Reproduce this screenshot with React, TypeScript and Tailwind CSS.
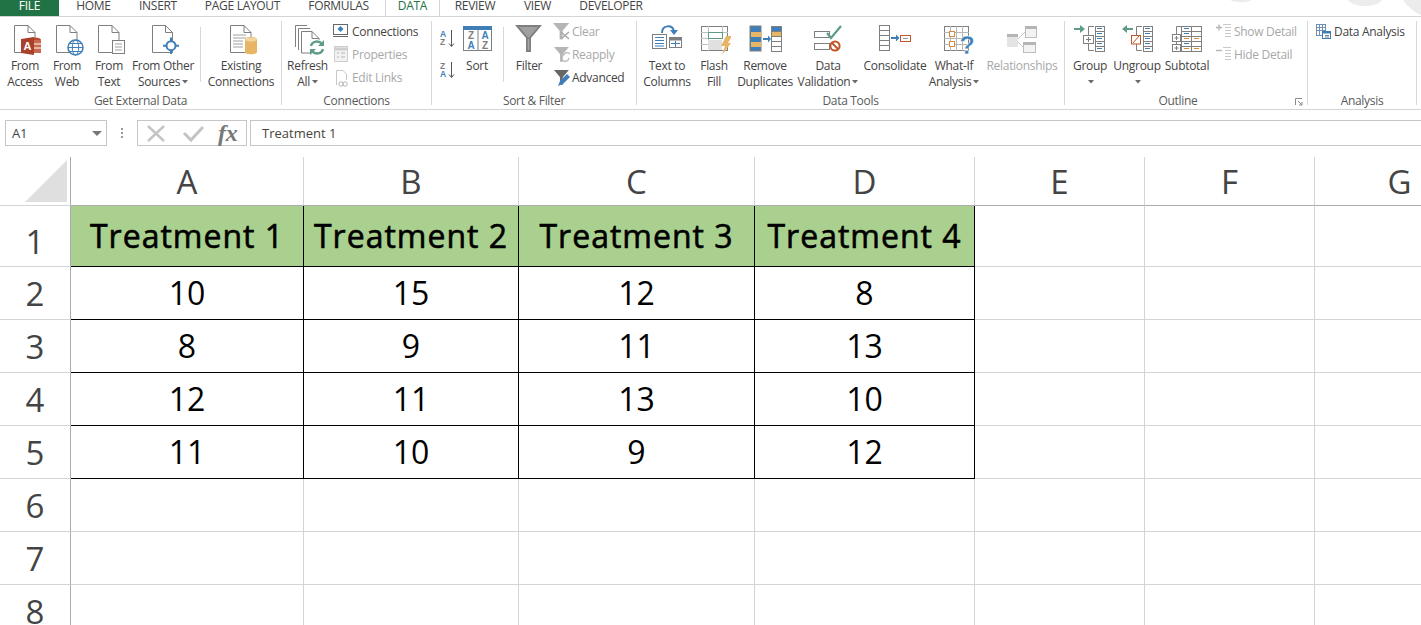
import type { ReactNode } from 'react';

const G = '#7f7f7f';
const BLUE = '#3f7fb8';
const ORANGE = '#e8b564';
const RUST = '#c0562a';
const TEAL = '#5f9c84';

// Icons are drawn in page coordinates, the viewBox picks the part they sit in
function Icon({ x, y, w, h, children }: { x: number; y: number; w: number; h: number; children: ReactNode }) {
  return (
    <svg width={w} height={h} viewBox={`${x} ${y} ${w} ${h}`} className="block shrink-0" fill="none">
      {children}
    </svg>
  );
}

function Doc({ x, r, t = 25.5, b = 52.5, color = G }: { x: number; r: number; t?: number; b?: number; color?: string }) {
  return (
    <path
      d={`M${x + 0.5} ${b}V${t}H${r - 7}L${r} ${t + 7}V${b}H${x + 0.5}M${r - 7} ${t}V${t + 7}H${r}`}
      stroke={color}
      fill="#fff"
    />
  );
}

function Caret() {
  return (
    <svg width="6" height="4" viewBox="0 0 6 4" className="inline-block ml-[2px] mb-[2px]">
      <path d="M0 0H6L3 3.5Z" fill="#6a6a6a" />
    </svg>
  );
}

function Big({ w, lines, caret, muted, icon, className = '' }: { w: string; lines: string[]; caret?: boolean; muted?: boolean; icon: ReactNode; className?: string }) {
  return (
    <div className={`${w} ${className} shrink-0 flex flex-col items-center ${muted ? 'text-[#a8a8a8]' : ''}`}>
      <div className="h-[35px] mt-[2px] flex justify-center">{icon}</div>
      {lines.map((l, i) => (
        <div key={i} className="h-[16px] leading-[16px] whitespace-nowrap">
          {l}
          {caret && lines.length > 1 && i === lines.length - 1 && <Caret />}
        </div>
      ))}
      {caret && lines.length === 1 && (
        <div className="h-[16px] leading-[16px]">
          <Caret />
        </div>
      )}
    </div>
  );
}

function Small({ label, icon, muted }: { label: string; icon: ReactNode; muted?: boolean }) {
  return (
    <div className={`h-[23px] flex items-center gap-[2px] whitespace-nowrap ${muted ? 'text-[#a8a8a8]' : ''}`}>
      {icon}
      <span>{label}</span>
    </div>
  );
}

function Group({ w, label, children, last, labelClass = '', launcher }: { w: string; label: string; children: ReactNode; last?: boolean; labelClass?: string; launcher?: boolean }) {
  return (
    <div className={`${w} h-[84px] mt-[4px] shrink-0 relative ${last ? '' : 'border-r border-[#d8d8d8]'}`}>
      <div className="h-[72px] flex">{children}</div>
      <div className={`h-[16px] leading-[16px] text-center text-[#5a5a5a] ${labelClass}`}>{label}</div>
      {launcher && (
        <svg width="8" height="8" viewBox="0 0 8 8" className="absolute right-[4px] top-[77px]">
          <path d="M0.5 7V0.5H7M3 3L7 7M7 4V7H4" stroke="#8a8a8a" fill="none" />
        </svg>
      )}
    </div>
  );
}

function Funnel({ x, y, s = 1, color = G }: { x: number; y: number; s?: number; color?: string }) {
  return <path transform={`translate(${x} ${y}) scale(${s})`} d="M0 0H27L16 13V27H11V13Z" fill={color} />;
}

function Sep({ className }: { className: string }) {
  return <div className={`w-px h-[55px] mt-[6px] bg-[#d8d8d8] shrink-0 ${className}`} />;
}

function Rows({ x, y, w, n, h, color = G, fill = 'none' }: { x: number; y: number; w: number; n: number; h: number; color?: string; fill?: string }) {
  return (
    <>
      <rect x={x + 0.5} y={y + 0.5} width={w} height={n * h} stroke={color} fill={fill} />
      {Array.from({ length: n - 1 }).map((_, i) => (
        <path key={i} d={`M${x} ${y + 0.5 + (i + 1) * h}H${x + w}`} stroke={color} />
      ))}
    </>
  );
}

const fromAccess = (
  <Icon x={4} y={23} w={42} h={34}>
    <Doc x={14} r={35} />
    <rect x={25} y={38} width={16} height={16} fill="#fff" />
    <ellipse cx={35} cy={40} rx={6} ry={2.5} fill="#b8482f" />
    <rect x={29} y={40} width={12} height={13} fill="#c9694f" />
    <path d="M30 44H41M30 48H41" stroke="#fff" />
    <path d="M21 39L34 37V55L21 53Z" fill="#a8402a" />
    <text x={23.5} y={50} fontSize={11} fontWeight={700} fill="#fff" fontFamily="Liberation Sans, sans-serif">A</text>
  </Icon>
);

const fromWeb = (
  <Icon x={46} y={23} w={42} h={34}>
    <Doc x={56} r={77} />
    <circle cx={75.5} cy={47.5} r={7.5} fill="#fff" stroke={BLUE} strokeWidth={1.5} />
    <ellipse cx={75.5} cy={47.5} rx={3.2} ry={7.5} stroke={BLUE} />
    <path d="M68 47.5H83M69.5 43.5H81.5M69.5 51.5H81.5" stroke={BLUE} />
  </Icon>
);

const fromText = (
  <Icon x={88} y={23} w={42} h={34}>
    <Doc x={98} r={119} />
    <rect x={112.5} y={40.5} width={12} height={13} fill="#fff" stroke={G} />
    <path d="M115 44H122M115 47H122M115 50H122" stroke="#a0a0a0" />
  </Icon>
);

const fromOther = (
  <Icon x={130} y={23} w={66} h={34}>
    <Doc x={152} r={172.5} />
    <path d="M171 37.5V54M163 45.7H179" stroke={BLUE} strokeWidth={2} />
    <circle cx={171} cy={45.7} r={4.5} fill="#fff" stroke={BLUE} strokeWidth={2} />
  </Icon>
);

const existing = (
  <Icon x={205} y={23} w={72} h={34}>
    <Doc x={230} r={251} />
    <path d="M233 35H246M233 38H246M233 41H243M233 44H243M233 47H243" stroke="#a0a0a0" />
    <path d="M245 39.5C245 36 257 36 257 39.5V52C257 55 245 55 245 52Z" fill={ORANGE} />
    <ellipse cx={251} cy={39.5} rx={6} ry={2} fill="#f3d6a0" />
  </Icon>
);

const refresh = (
  <Icon x={285} y={23} w={45} h={34}>
    <path d="M295.5 47V25.5H307M298.5 50V28.5H310" stroke={G} />
    <Doc x={301} r={319} t={31.5} b={53} />
    <circle cx={317} cy={47.5} r={8} fill="#fff" />
    <path d="M311 46C312 41 319 40 322 44M323 49C322 54 315 55 312 51" stroke={TEAL} strokeWidth={2.4} />
    <path d="M324 40V46H318ZM310 55V49H316Z" fill={TEAL} />
  </Icon>
);

const sortBig = (
  <Icon x={457} y={23} w={40} h={34}>
    <rect x={463.5} y={27.5} width={28} height={23} fill="#fff" stroke={G} />
    <rect x={463} y={26} width={29} height={4} fill={BLUE} />
    <path d="M478 30V50" stroke={G} />
    <g fontSize={10} fontFamily="Liberation Sans, sans-serif" fontWeight={700} textAnchor="middle">
      <text x={471} y={39} fill={G}>Z</text>
      <text x={471} y={49} fill={BLUE}>A</text>
      <text x={485} y={39} fill={BLUE}>A</text>
      <text x={485} y={49} fill={G}>Z</text>
    </g>
  </Icon>
);

const sortSmall = (
  <Icon x={440} y={23} w={17} h={56}>
    <g fontSize={8.5} fontFamily="Liberation Sans, sans-serif" fontWeight={700}>
      <text x={440} y={37} fill={BLUE}>A</text>
      <text x={440} y={45} fill={G}>Z</text>
      <text x={440} y={69} fill={G}>Z</text>
      <text x={440} y={77} fill={BLUE}>A</text>
    </g>
    <path d="M451.5 30V46M449 43.5L451.5 46.5L454 43.5M451.5 62V77M449 74.5L451.5 77.5L454 74.5" stroke="#555" />
  </Icon>
);

const filter = (
  <Icon x={507} y={23} w={44} h={34}>
    <Funnel x={515} y={25} />
    <path d="M519 27H538L528.5 38Z" fill="#a0a0a0" />
    <path d="M528.5 39V50" stroke="#a8a8a8" strokeWidth={1.5} />
  </Icon>
);

const clear = (
  <Icon x={553} y={20} w={17} h={23}>
    <Funnel x={553} y={23} s={0.6} color="#b5b5b5" />
    <path d="M561 32L569 39M569 32L561 39" stroke="#a8a8a8" strokeWidth={1.5} />
  </Icon>
);

const reapply = (
  <Icon x={553} y={43} w={17} h={23}>
    <Funnel x={554} y={47} s={0.55} color="#b5b5b5" />
    <path d="M563 56C564 52 568 52 570 54M569 58C568 62 564 62 562 60" stroke="#bbb" strokeWidth={1.3} />
  </Icon>
);

const advanced = (
  <Icon x={553} y={66} w={17} h={23}>
    <Funnel x={554} y={70} s={0.55} color="#666" />
    <path d="M558 86L560 81L567 74L570 77L563 84Z" fill={BLUE} />
  </Icon>
);

const textToColumns = (
  <Icon x={637} y={23} w={60} h={34}>
    <rect x={652.5} y={34.5} width={14} height={14} fill="#fff" stroke={G} />
    <path d="M655 37.5H664M655 40.5H664M655 43.5H664M655 46H664" stroke={BLUE} />
    <rect x={669.5} y={37.5} width={12} height={10} fill="#fff" stroke={G} />
    <path d="M669 39H682" stroke={G} strokeWidth={3} />
    <path d="M675.5 41V47M671 43.5H680" stroke={BLUE} />
    <path d="M662 33C662 25 672 24 674 31" stroke={BLUE} strokeWidth={2} />
    <path d="M670 30H678L674 35Z" fill={BLUE} />
  </Icon>
);

const flashFill = (
  <Icon x={697} y={23} w={34} h={34}>
    <rect x={701.5} y={26.5} width={26} height={24} stroke={G} fill="#fff" />
    <path d="M701 32.5H728M701 38.5H722M701 44.5H722M708.5 26V51M722.5 26V38" stroke="#c0c0c0" />
    <rect x={708} y={40} width={14} height={10} fill="#e0e0e0" />
    <rect x={708.5} y={32.5} width={14} height={6} fill="#fff" stroke={TEAL} />
    <path d="M726 36H732L728 43H731L722 55L725 46H721Z" fill={ORANGE} />
  </Icon>
);

const dupes = (
  <Icon x={731} y={23} w={68} h={34}>
    <rect x={750} y={26} width={11} height={25} fill={BLUE} stroke={G} />
    <rect x={751} y={32} width={10} height={5} fill={ORANGE} />
    <rect x={751} y={42} width={10} height={5} fill={ORANGE} />
    <path d="M763 39H769" stroke={BLUE} strokeWidth={2} />
    <path d="M768 35.5L771 39L768 42.5Z" fill={BLUE} />
    <Rows x={771} y={26} w={10} n={5} h={5} />
    <rect x={772} y={27} width={9} height={4} fill={BLUE} />
    <rect x={772} y={32} width={9} height={4} fill={ORANGE} />
  </Icon>
);

const validation = (
  <Icon x={799} y={23} w={58} h={34}>
    <rect x={814.5} y={31.5} width={15} height={6} fill="#fff" stroke={G} />
    <rect x={814.5} y={43.5} width={15} height={6} fill="#fff" stroke={G} />
    <path d="M827 33L831 38L841 26" stroke={TEAL} strokeWidth={2.2} />
    <circle cx={835} cy={46} r={4.6} fill="#fff" stroke={RUST} strokeWidth={2} />
    <path d="M832 43L838 49" stroke={RUST} strokeWidth={2} />
  </Icon>
);

const consolidate = (
  <Icon x={857} y={23} w={76} h={34}>
    <Rows x={879} y={25} w={10} n={5} h={5} />
    <path d="M891 38H897" stroke={BLUE} strokeWidth={2} />
    <path d="M896 34.5L899.5 38L896 41.5Z" fill={BLUE} />
    <rect x={900.5} y={35.5} width={10} height={6} stroke={RUST} />
    <path d="M903 38.5H908" stroke="#999" />
  </Icon>
);

const whatIf = (
  <Icon x={933} y={23} w={42} h={34}>
    <rect x={944.5} y={26.5} width={24} height={24} stroke={G} fill="#fff" />
    <path d="M944 32.5H969M944 38.5H969M944 44.5H969M950.5 26V51M956.5 26V51M962.5 26V51" stroke="#b5b5b5" />
    <rect x={949.5} y={31.5} width={5} height={5} fill="#fff" stroke="#d98a3d" />
    <rect x={949.5} y={41.5} width={5} height={5} fill="#fff" stroke="#d98a3d" />
    <text x={967} y={54} fontSize={25} fontWeight={700} textAnchor="middle" fill={BLUE} stroke="#fff" strokeWidth={0.4} fontFamily="Liberation Sans, sans-serif">?</text>
  </Icon>
);

const relationships = (
  <Icon x={980} y={23} w={84} h={34}>
    <path d="M1018 39L1026 31M1018 42L1024 48" stroke="#c8c8c8" />
    <rect x={1007} y={34} width={11} height={13} fill="#e4e4e4" />
    <rect x={1007} y={34} width={11} height={3} fill="#b5b5b5" />
    <rect x={1025.5} y={26.5} width={11} height={11} fill="#f3f3f3" stroke="#bdbdbd" />
    <rect x={1025} y={26} width={12} height={3} fill="#b5b5b5" />
    <rect x={1023.5} y={42.5} width={12} height={10} fill="#f3f3f3" stroke="#bdbdbd" />
    <rect x={1023} y={42} width={13} height={3} fill="#b5b5b5" />
  </Icon>
);

const outlineCol = (x: number) => (
  <>
    <Rows x={x} y={26} w={9} n={5} h={5} />
    <path d={`M${x + 2} 28.5H${x + 7}M${x + 2} 33.5H${x + 7}M${x + 2} 38.5H${x + 7}M${x + 2} 43.5H${x + 7}M${x + 2} 48.5H${x + 7}`} stroke={BLUE} />
  </>
);

const groupIcon = (
  <Icon x={1065} y={23} w={50} h={34}>
    {outlineCol(1095)}
    <path d="M1094 26.5H1088.5V35M1088.5 43V50.5H1094" stroke={G} />
    <rect x={1083.5} y={35.5} width={10} height={8} fill="#fff" stroke={G} />
    <path d="M1086 39.5H1091M1088.5 37V42" stroke={G} />
    <path d="M1074 29H1082" stroke={TEAL} strokeWidth={2} />
    <path d="M1080 25L1085 29L1080 33Z" fill={TEAL} />
  </Icon>
);

const ungroupIcon = (
  <Icon x={1115} y={23} w={44} h={34}>
    {outlineCol(1143)}
    <path d="M1142 26.5H1136.5V35M1136.5 43V50.5H1142" stroke={G} />
    <rect x={1131.5} y={35.5} width={9} height={8.5} fill="#fff" stroke={RUST} />
    <path d="M1133 43L1139 36" stroke={RUST} />
    <path d="M1125 29H1133" stroke={TEAL} strokeWidth={2} />
    <path d="M1127 25L1122 29L1127 33Z" fill={TEAL} />
  </Icon>
);

const subtotalIcon = (
  <Icon x={1159} y={23} w={56} h={34}>
    <path d="M1181 26.5H1176.5V34M1176.5 41V44" stroke={G} />
    <rect x={1172.5} y={34.5} width={8} height={7} fill="#fff" stroke={G} />
    <rect x={1172.5} y={44.5} width={8} height={7} fill="#fff" stroke={G} />
    <path d="M1174.5 38H1178.5M1176.5 36V40M1174.5 48H1178.5M1176.5 46V50" stroke={G} />
    <Rows x={1181} y={26} w={20} n={5} h={5} />
    <path d="M1191.5 26V51" stroke={G} />
    <path d="M1184 28.5H1189M1184 33.5H1189M1184 43.5H1189" stroke={BLUE} />
    <path d="M1184 38.5H1189M1194 38.5H1199M1184 48.5H1189M1194 48.5H1199" stroke="#d98a3d" />
  </Icon>
);

const connIcon = (
  <Icon x={333} y={20} w={17} h={23}>
    <rect x={333.5} y={24.5} width={14} height={10} fill="#fff" stroke="#666" />
    <path d="M333 36.5H348" stroke="#666" />
    <path d="M340.5 26L343.5 29L340.5 32L337.5 29Z" fill={BLUE} />
  </Icon>
);

const propsIcon = (
  <Icon x={333} y={43} w={17} h={23}>
    <rect x={334.5} y={46.5} width={13} height={15} fill="#f2f2f2" stroke="#cfcfcf" />
    <path d="M334 49H348" stroke="#cfcfcf" strokeWidth={3} />
    <path d="M337 53H339M341 53H345M337 57H339M341 57H345" stroke="#b5b5b5" />
  </Icon>
);

const linksIcon = (
  <Icon x={333} y={66} w={17} h={23}>
    <path d="M336.5 85V70.5H343L346.5 74V80" stroke="#c8c8c8" fill="#fff" />
    <circle cx={341} cy={84} r={2.2} stroke="#b5b5b5" />
    <circle cx={345} cy={84} r={2.2} stroke="#b5b5b5" />
  </Icon>
);

const detailIcon = (plus: boolean, y: number) => (
  <Icon x={1216} y={y} w={16} h={23}>
    <path d={`M1216 ${y + 7.5}H1222${plus ? `M1219 ${y + 4.5}V${y + 10.5}` : ''}`} stroke="#b5b5b5" strokeWidth={1.4} />
    <path d={`M1223 ${y + 4.5}H1231M1225 ${y + 7.5}H1231M1225 ${y + 10.5}H1231M1225 ${y + 13.5}H1231M1225 ${y + 16.5}H1231`} stroke="#c8c8c8" />
  </Icon>
);

const analysisIcon = (
  <Icon x={1316} y={20} w={16} h={23}>
    <rect x={1316.5} y={24.5} width={9} height={11} fill="#fff" stroke="#6f8fb3" />
    <path d="M1316 27.5H1326M1316 30.5H1326M1319.5 24V36M1322.5 24V36" stroke="#6f8fb3" />
    <rect x={1322.5} y={31.5} width={8} height={7} fill="#fff" stroke={BLUE} />
    <path d="M1322 32.5H1331" stroke={BLUE} strokeWidth={2} />
    <path d="M1325 35.5H1329M1325 37H1329" stroke="#666" strokeWidth={0.8} />
  </Icon>
);

const tabs = [
  { name: 'HOME', w: 'w-[69px]' },
  { name: 'INSERT', w: 'w-[60px]' },
  { name: 'PAGE LAYOUT', w: 'w-[109px]' },
  { name: 'FORMULAS', w: 'w-[83px]' },
];

const cols = ['A', 'B', 'C', 'D', 'E', 'F', 'G'];
const rows = [
  ['Treatment 1', 'Treatment 2', 'Treatment 3', 'Treatment 4'],
  ['10', '15', '12', '8'],
  ['8', '9', '11', '13'],
  ['12', '11', '13', '10'],
  ['11', '10', '9', '12'],
  ['', '', '', ''],
  ['', '', '', ''],
  ['', '', '', ''],
];

export default function App() {
  return (
    <div className="w-[1421px] h-[625px] overflow-hidden bg-white text-[#444] text-[12px] font-['Open_Sans','Liberation_Sans',sans-serif] tracking-[-0.3px]">
      {/* tab strip, cut off at the top of the window */}
      <div className="h-[17px] relative overflow-hidden border-b border-[#d4d4d4] flex">
        <div className="w-[59px] h-[16px] bg-[#217346] text-white text-center leading-[11px]">FILE</div>
        {tabs.map((t) => (
          <div key={t.name} className={`${t.w} shrink-0 text-center leading-[11px]`}>
            {t.name}
          </div>
        ))}
        <div className="w-[55px] h-[17px] ml-[5px] bg-white border-x border-[#d4d4d4] text-[#217346] text-center leading-[11px] relative z-10">DATA</div>
        <div className="w-[70px] text-center leading-[11px]">REVIEW</div>
        <div className="w-[55px] text-center leading-[11px]">VIEW</div>
        <div className="w-[92px] text-center leading-[11px]">DEVELOPER</div>
        <svg width="241" height="16" viewBox="1180 0 241 16" className="absolute right-0 top-0">
          <path d="M1230 0C1236 3 1246 3 1252 0ZM1348 0C1354 8 1376 8 1382 0ZM1403 0C1408 7 1414 12 1421 15V0Z" fill="#ececec" />
        </svg>
      </div>

      {/* ribbon */}
      <div className="h-[93px] border-b border-[#d4d4d4] flex">
        <Group w="w-[282px]" label="Get External Data">
          <div className="w-[4px] shrink-0" />
          <Big w="w-[42px]" lines={['From', 'Access']} icon={fromAccess} />
          <Big w="w-[42px]" lines={['From', 'Web']} icon={fromWeb} />
          <Big w="w-[42px]" lines={['From', 'Text']} icon={fromText} />
          <Big w="w-[66px]" lines={['From Other', 'Sources']} caret icon={fromOther} />
          <Sep className="ml-[4px]" />
          <Big w="w-[72px]" className="ml-[4px]" lines={['Existing', 'Connections']} icon={existing} />
        </Group>
        <Group w="w-[150px]" label="Connections">
          <Big w="w-[45px]" className="ml-[3px]" lines={['Refresh', 'All']} caret icon={refresh} />
          <div className="ml-[3px] -mt-px">
            <Small label="Connections" icon={connIcon} />
            <Small label="Properties" muted icon={propsIcon} />
            <Small label="Edit Links" muted icon={linksIcon} />
          </div>
        </Group>
        <Group w="w-[205px]" label="Sort & Filter">
          <div className="ml-[8px] mt-[2px]">{sortSmall}</div>
          <Big w="w-[40px]" lines={['Sort']} icon={sortBig} />
          <Sep className="ml-[6px]" />
          <Big w="w-[44px]" className="ml-[3px]" lines={['Filter']} icon={filter} />
          <div className="ml-[2px] -mt-px">
            <Small label="Clear" muted icon={clear} />
            <Small label="Reapply" muted icon={reapply} />
            <Small label="Advanced" icon={advanced} />
          </div>
        </Group>
        <Group w="w-[428px]" label="Data Tools">
          <Big w="w-[60px]" lines={['Text to', 'Columns']} icon={textToColumns} />
          <Big w="w-[34px]" lines={['Flash', 'Fill']} icon={flashFill} />
          <Big w="w-[68px]" lines={['Remove', 'Duplicates']} icon={dupes} />
          <Big w="w-[58px]" lines={['Data', 'Validation']} caret icon={validation} />
          <Big w="w-[76px]" lines={['Consolidate']} icon={consolidate} />
          <Big w="w-[42px]" lines={['What-If', 'Analysis']} caret icon={whatIf} />
          <Big w="w-[84px]" className="ml-[5px]" muted lines={['Relationships']} icon={relationships} />
        </Group>
        <Group w="w-[243px]" label="Outline" labelClass="pr-[16px]" launcher>
          <Big w="w-[50px]" lines={['Group']} caret icon={groupIcon} />
          <Big w="w-[44px]" lines={['Ungroup']} caret icon={ungroupIcon} />
          <Big w="w-[56px]" lines={['Subtotal']} icon={subtotalIcon} />
          <div className="ml-[1px] -mt-px">
            <Small label="Show Detail" muted icon={detailIcon(true, 20)} />
            <Small label="Hide Detail" muted icon={detailIcon(false, 43)} />
          </div>
        </Group>
        <Group w="w-[109px]" label="Analysis">
          <div className="ml-[8px] -mt-px">
            <Small label="Data Analysis" icon={analysisIcon} />
          </div>
        </Group>
      </div>

      {/* formula bar */}
      <div className="h-[47px] pt-[10px] flex items-start">
        <div className="ml-[5px] w-[102px] h-[26px] border border-[#c6c6c6] flex items-center justify-between pl-[6px] pr-[4px] pt-[1px] text-[13px]">
          <span>A1</span>
          <svg width="10" height="5" viewBox="0 0 10 5">
            <path d="M0 0H10L5 5Z" fill="#777" />
          </svg>
        </div>
        <div className="w-[30px] h-[26px] flex flex-col items-center justify-center gap-[2px] shrink-0">
          <span className="w-[2px] h-[2px] bg-[#999]" />
          <span className="w-[2px] h-[2px] bg-[#999]" />
          <span className="w-[2px] h-[2px] bg-[#999]" />
        </div>
        <div className="w-[110px] h-[26px] border border-[#c6c6c6] flex items-center shrink-0">
          <svg width="36" height="24" viewBox="0 0 36 24">
            <path d="M10 5L26 20M26 5L10 20" stroke="#c4c4c4" strokeWidth={2.4} />
          </svg>
          <svg width="38" height="24" viewBox="0 0 38 24">
            <path d="M10 12L17 19L29 6" stroke="#c4c4c4" strokeWidth={3} fill="none" />
          </svg>
          <span className="font-['Liberation_Serif',serif] italic font-bold text-[24px] leading-none text-[#777] ml-[6px]">fx</span>
        </div>
        <div className="ml-[3px] flex-1 h-[26px] border border-[#c6c6c6] border-r-0 flex items-center pl-[11px] pt-[1px] text-[#484438] text-[13px] tracking-normal">Treatment 1</div>
      </div>

      {/* sheet */}
      <div className="grid grid-cols-[71px_233px_215px_236px_220px_170px_170px_170px] grid-rows-[49px_61px_53px_53px_53px_53px_53px_53px_53px]">
        <div className="border-r border-b border-r-[#ababab] border-b-[#d4d4d4] flex items-end justify-end pb-[3px] pr-[3px]">
          <svg width="42" height="42" viewBox="0 0 42 42">
            <path d="M42 0V42H0Z" fill="#dfdfdf" />
          </svg>
        </div>
        {cols.map((c) => (
          <div key={c} className="border-r border-b border-r-[#d4d4d4] border-b-[#ababab] flex items-center justify-center pt-[2px] text-[33px] tracking-normal text-[#444]">
            {c}
          </div>
        ))}
        {rows.map((row, r) => (
          <div key={r} className="contents">
            <div className={`border-r border-b border-r-[#ababab] border-b-[#d4d4d4] flex items-center justify-center text-[33px] tracking-normal text-[#444] ${r === 0 ? 'pt-[12px]' : 'pt-[2px]'}`}>
              {r + 1}
            </div>
            {row.map((v, i) => (
              <div
                key={i}
                className={`border-r border-b flex items-center justify-center text-[32px] text-black ${r === 0 ? '[-webkit-text-stroke:0.6px_black] tracking-[1px] bg-[#a9d08e]' : 'tracking-normal'} ${r < 5 ? 'border-black' : 'border-[#d4d4d4]'} ${r === 5 ? 'border-r-[#d4d4d4]' : ''}`}
              >
                {v}
              </div>
            ))}
            <div className="border-r border-b border-[#d4d4d4]" />
            <div className="border-r border-b border-[#d4d4d4]" />
            <div className="border-r border-b border-[#d4d4d4]" />
          </div>
        ))}
      </div>
    </div>
  );
}
